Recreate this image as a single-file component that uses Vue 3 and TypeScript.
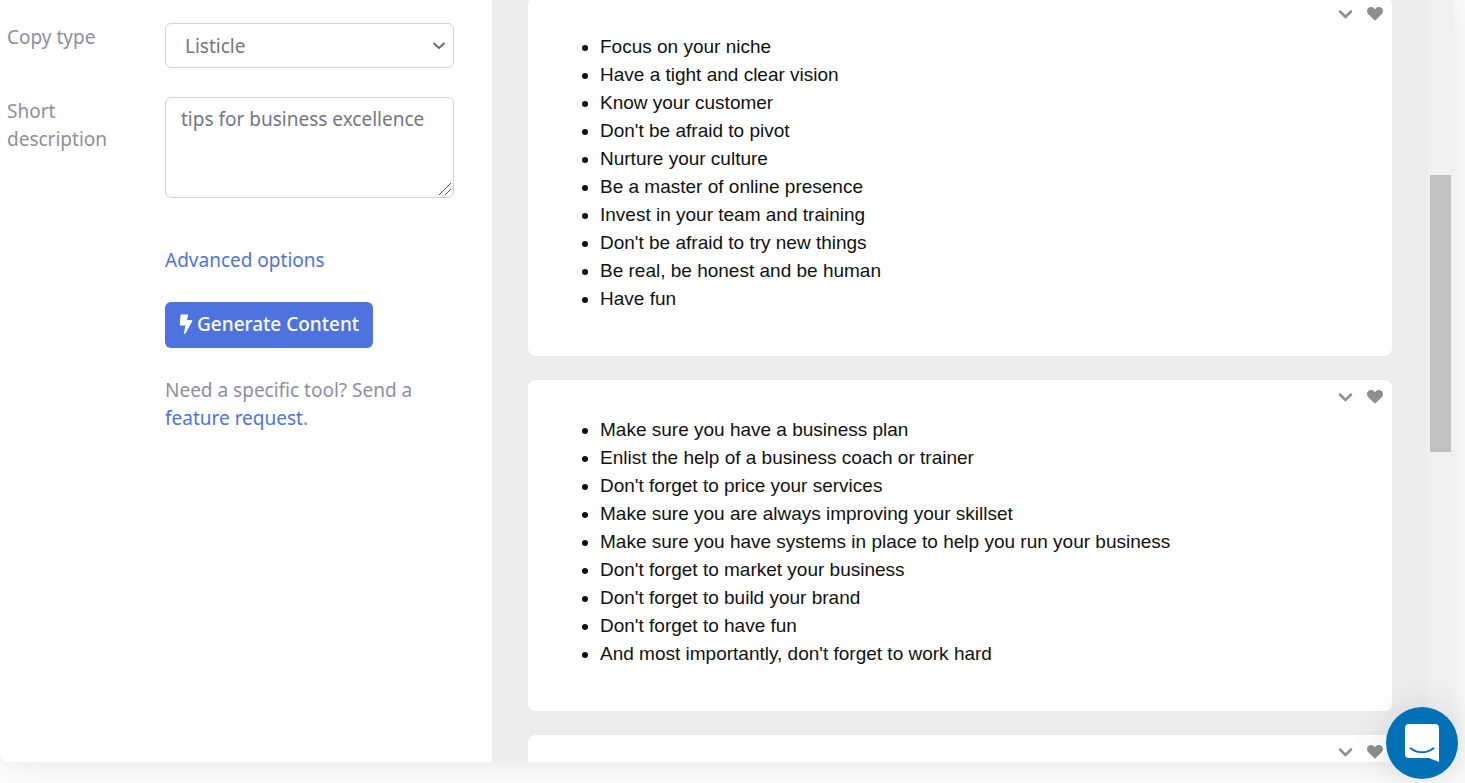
<script setup lang="ts">
import { ref } from 'vue'

interface Result {
  id: number
  items: string[]
}

const copyType = ref('Listicle')
const description = ref('tips for business excellence')

const results: Result[] = [
  {
    id: 1,
    items: [
      'Focus on your niche',
      'Have a tight and clear vision',
      'Know your customer',
      "Don't be afraid to pivot",
      'Nurture your culture',
      'Be a master of online presence',
      'Invest in your team and training',
      "Don't be afraid to try new things",
      'Be real, be honest and be human',
      'Have fun',
    ],
  },
  {
    id: 2,
    items: [
      'Make sure you have a business plan',
      'Enlist the help of a business coach or trainer',
      "Don't forget to price your services",
      'Make sure you are always improving your skillset',
      'Make sure you have systems in place to help you run your business',
      "Don't forget to market your business",
      "Don't forget to build your brand",
      "Don't forget to have fun",
      "And most importantly, don't forget to work hard",
    ],
  },
  { id: 3, items: [] },
]
</script>

<template>
  <div class="page">
    <main class="shell">
      <form class="form" @submit.prevent>
        <label class="label" for="copy-type">Copy type</label>
        <div class="field select-field">
          <select id="copy-type" v-model="copyType" class="control select">
            <option>Listicle</option>
          </select>
          <svg class="caret" viewBox="0 0 14 10" aria-hidden="true">
            <path d="M1.500 2l5.500 5 5.500-5" />
          </svg>
        </div>

        <label class="label" for="description">Short description</label>
        <div class="field">
          <textarea id="description" v-model="description" class="control textarea"></textarea>
          <svg class="grip" viewBox="0 0 14 14" aria-hidden="true">
            <path d="M1 13L13 1M7 13L13 7" />
          </svg>
        </div>

        <div class="actions">
          <a class="link" href="#advanced">Advanced options</a>
          <button class="generate" type="submit">
            <svg class="bolt" viewBox="0 0 14 20" aria-hidden="true">
              <path d="M2.2 0.5H9.2L8 6H12.6Q13.8 6.2 13.2 7.3L6.6 19.2Q5.8 20.2 4.8 19.4L6.5 11.4H1.6Q0.5 11.2 0.7 10.2L1.6 1.2Q1.7 0.6 2.2 0.5Z" />
            </svg>
            <span>Generate Content</span>
          </button>
          <p class="note">
            Need a specific tool? Send a <a class="link" href="#request">feature request</a>.
          </p>
        </div>
      </form>

      <section class="results">
        <article v-for="result in results" :key="result.id" class="card">
          <div class="tools">
            <button type="button" class="tool" aria-label="Expand">
              <svg class="chevron" viewBox="0 0 15 10" aria-hidden="true">
                <path d="M2 2.500l5.500 5.500 5.500-5.500" />
              </svg>
            </button>
            <button type="button" class="tool" aria-label="Favourite">
              <svg class="heart" viewBox="0 0 16 14" aria-hidden="true">
                <path d="M8 13.800L1.300 7.300C-0.400 5.500-0.300 2.500 1.400 1.100C3.200-0.400 5.700-0.100 7.200 1.500L8 2.300L8.800 1.500C10.300-0.100 12.800-0.400 14.600 1.100C16.300 2.500 16.400 5.500 14.700 7.300Z" />
              </svg>
            </button>
          </div>
          <ul class="list">
            <li v-for="item in result.items" :key="item">{{ item }}</li>
          </ul>
        </article>
      </section>

      <div class="track" aria-hidden="true"><div class="thumb"></div></div>
    </main>

    <button type="button" class="chat" aria-label="Open chat">
      <svg class="chat-icon" viewBox="0 0 34 38" aria-hidden="true">
        <path class="bubble" d="M4 0H30Q34 0 34 4V38L24 34H4Q0 34 0 30V4Q0 0 4 0Z" />
        <path class="smile" d="M5.500 24.200Q17 32.400 28.500 24.200" />
      </svg>
    </button>
  </div>
</template>

<style>
body {
  background: #fdfdfd;
}
</style>

<style scoped>
.page {
  height: 100vh;
  overflow: hidden;
  box-sizing: border-box;
  padding: 0 12px 21px 0;
  font-family: "Noto Sans", "Open Sans", sans-serif;
  font-size: 19px;
  line-height: 28px;
  color: #8e8e9f;
}

.shell {
  display: grid;
  grid-template-columns: 492fr 936fr 25px;
  height: 100%;
  overflow: hidden;
  background: #fff;
  border-radius: 0 0 0 8px;
  box-shadow: 0 0 36px rgba(0, 0, 0, 0.1);
}

.form {
  display: grid;
  grid-template-columns: 128px 1fr;
  align-content: start;
  column-gap: 30px;
  row-gap: 29px;
  padding: 23px 38px 0 7px;
}

.label {
  align-self: start;
}

.field {
  position: relative;
  display: flex;
}

.control {
  width: 100%;
  box-sizing: border-box;
  margin: 0;
  border: 1px solid #d1d1e0;
  border-radius: 6px;
  background: #fff;
  color: #757584;
  font: inherit;
  outline: none;
}

.select {
  height: 45px;
  padding: 0 36px 0 19px;
  appearance: none;
}

.caret {
  position: absolute;
  top: 18px;
  right: 8px;
  width: 14px;
  height: 10px;
  fill: none;
  stroke: #6c6c7a;
  stroke-width: 2;
  pointer-events: none;
}

.textarea {
  height: 101px;
  padding: 7px 15px;
  resize: none;
}

.grip {
  position: absolute;
  right: 2px;
  bottom: 2px;
  width: 14px;
  height: 14px;
  stroke: #555;
  stroke-width: 1;
  pointer-events: none;
}

.actions {
  grid-column: 2;
  display: flex;
  flex-direction: column;
  align-items: flex-start;
  gap: 28px;
  padding-top: 19px;
}

.link {
  color: #4e73df;
  text-decoration: none;
}

.generate {
  display: flex;
  align-items: center;
  gap: 4px;
  height: 46px;
  padding: 0 14px 2px;
  border: 0;
  border-radius: 6px;
  background: #4e73df;
  color: #fff;
  font: inherit;
  font-weight: 500;
  white-space: nowrap;
}

.bolt {
  width: 14px;
  height: 20px;
  fill: #fff;
}

.note {
  margin: 0;
}

.results {
  display: flex;
  flex-direction: column;
  gap: 24px;
  min-height: 0;
  overflow: hidden;
  box-sizing: border-box;
  padding: 0 36px;
  background: #ededed;
}

.card {
  flex: none;
  border-radius: 8px;
  background: #fff;
}

.card:first-child {
  margin-top: -3px;
}

.tools {
  display: flex;
  justify-content: flex-end;
  align-items: center;
  gap: 14px;
  height: 33px;
  padding-right: 9px;
}

.tool {
  display: flex;
  padding: 0;
  border: 0;
  background: none;
}

.chevron {
  width: 15px;
  height: 10px;
  fill: none;
  stroke: #8e8e8e;
  stroke-width: 2.5;
  stroke-linecap: round;
}

.heart {
  width: 16px;
  height: 14px;
  fill: #8e8e8e;
}

.list {
  margin: 0;
  padding: 3px 24px 43px 72px;
  font-family: "Liberation Sans", Arial, sans-serif;
  color: #111;
}

.track {
  padding: 175px 2px 0;
  background: #f0f0f0;
}

.thumb {
  height: 277px;
  background: #c1c1c1;
}

.chat {
  position: absolute;
  right: 7px;
  bottom: 4px;
  display: flex;
  justify-content: center;
  align-items: center;
  width: 72px;
  height: 72px;
  padding: 0;
  border: 0;
  border-radius: 50%;
  background: #0071b6;
  box-shadow: 0 2px 40px rgba(0, 0, 0, 0.12);
}

.chat-icon {
  width: 34px;
  height: 38px;
}

.bubble {
  fill: #fff;
}

.smile {
  fill: none;
  stroke: #0071b6;
  stroke-width: 2;
  stroke-linecap: round;
}
</style>
